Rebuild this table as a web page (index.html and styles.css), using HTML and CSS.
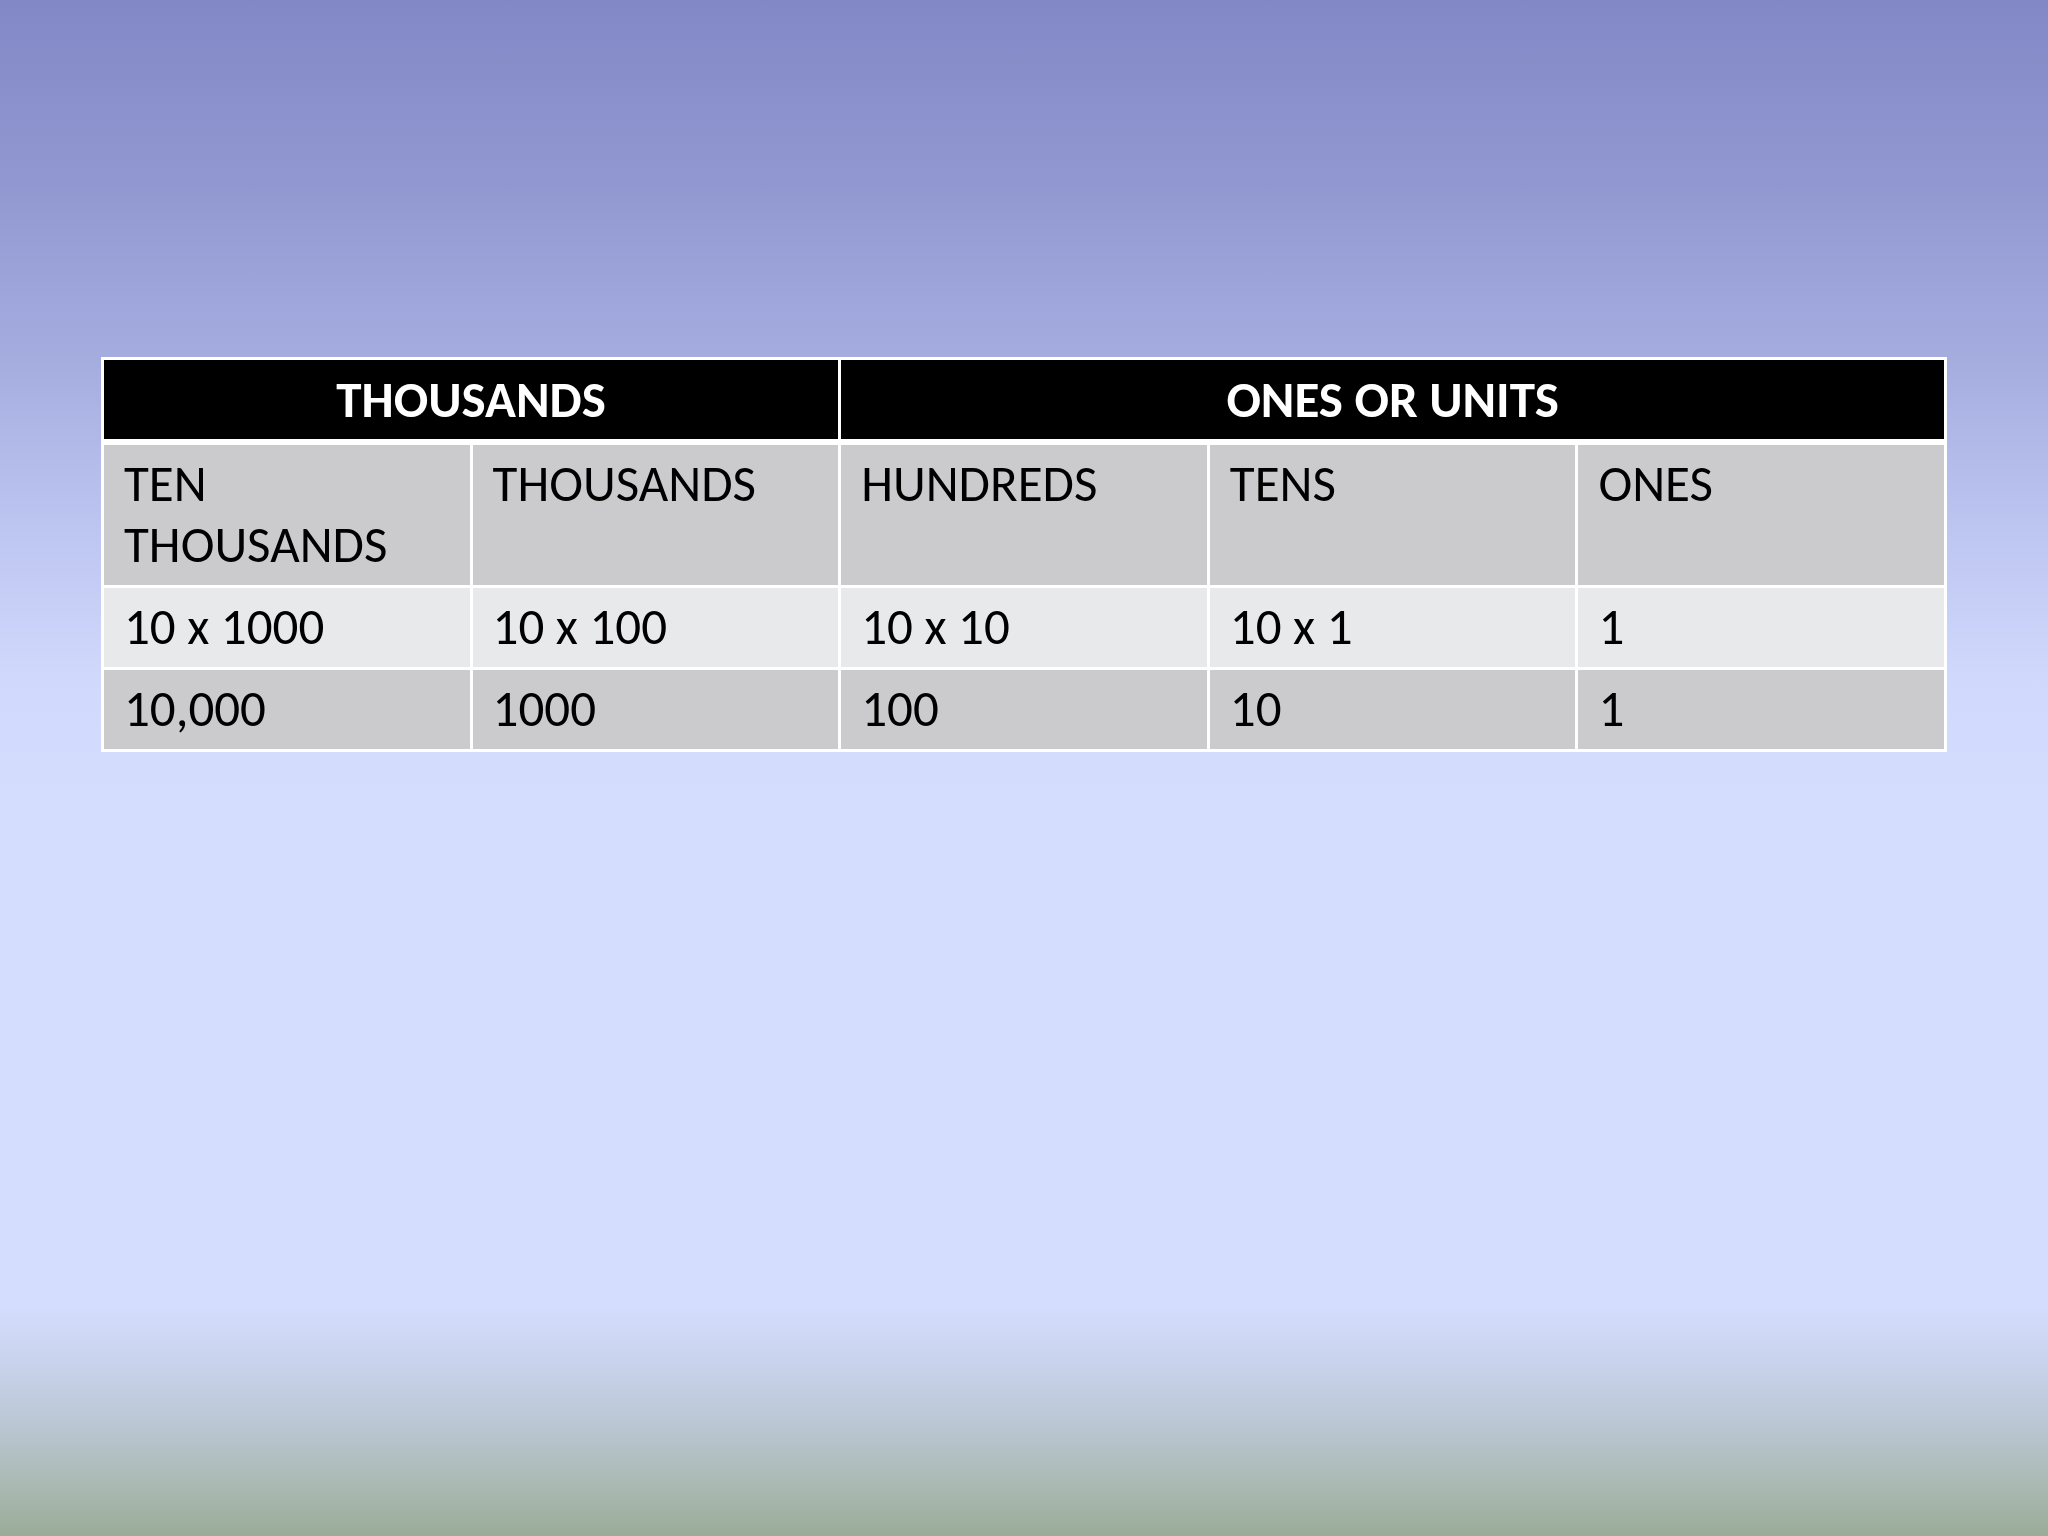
FILE: index.html
```html
<!DOCTYPE html>
<html lang="en">
<head>
<meta charset="utf-8">
<title>Place value</title>
<link rel="stylesheet" href="styles.css">
</head>
<body>
<main class="slide">
  <table class="place-table">
    <colgroup>
      <col class="c"><col class="c"><col class="c"><col class="c"><col class="c">
    </colgroup>
    <thead>
      <tr class="head-row">
        <th colspan="2">THOUSANDS</th>
        <th colspan="3">ONES OR UNITS</th>
      </tr>
    </thead>
    <tbody>
      <tr class="row-dark">
        <td>TEN<br>THOUSANDS</td>
        <td>THOUSANDS</td>
        <td>HUNDREDS</td>
        <td>TENS</td>
        <td>ONES</td>
      </tr>
      <tr class="row-light">
        <td>10 x 1000</td>
        <td>10 x 100</td>
        <td>10 x 10</td>
        <td>10 x 1</td>
        <td>1</td>
      </tr>
      <tr class="row-dark">
        <td>10,000</td>
        <td>1000</td>
        <td>100</td>
        <td>10</td>
        <td>1</td>
      </tr>
    </tbody>
  </table>
</main>
</body>
</html>
```

FILE: styles.css
```css
html, body {
  margin: 0;
  padding: 0;
}

body {
  width: 2048px;
  height: 1536px;
  overflow: hidden;
  background: linear-gradient(to bottom,
    #8288c6 0%,
    #9198d1 12%,
    #a6aee0 24%,
    #bcc5f0 34%,
    #d0d8fc 44%,
    #d5ddfe 52%,
    #d5ddfe 85%,
    #c8d2ea 89%,
    #b9c6d2 93%,
    #a9b8b0 97%,
    #9bab99 100%);
  font-family: "Carlito", "Lato", "Liberation Sans", sans-serif;
}

.slide {
  display: flex;
  padding: 357px 0 0 101px;
}

.place-table {
  width: 1846px;
  table-layout: fixed;
  border-collapse: collapse;
  border: 3px solid #ffffff;
  font-size: 51px;
  line-height: 61px;
  color: #000000;
}

.place-table th,
.place-table td {
  border: 3px solid #ffffff;
  padding: 8px 20px 10px 20px;
  vertical-align: top;
  text-align: left;
  font-weight: normal;
}

.head-row th {
  background: #000000;
  color: #ffffff;
  font-weight: bold;
  text-align: center;
  vertical-align: middle;
  padding-top: 9px;
  padding-bottom: 9px;
  border-bottom: 6px solid #ffffff;
}

.row-dark td {
  background: #cbcbcd;
}

.row-light td {
  background: #e8e9eb;
}
```
